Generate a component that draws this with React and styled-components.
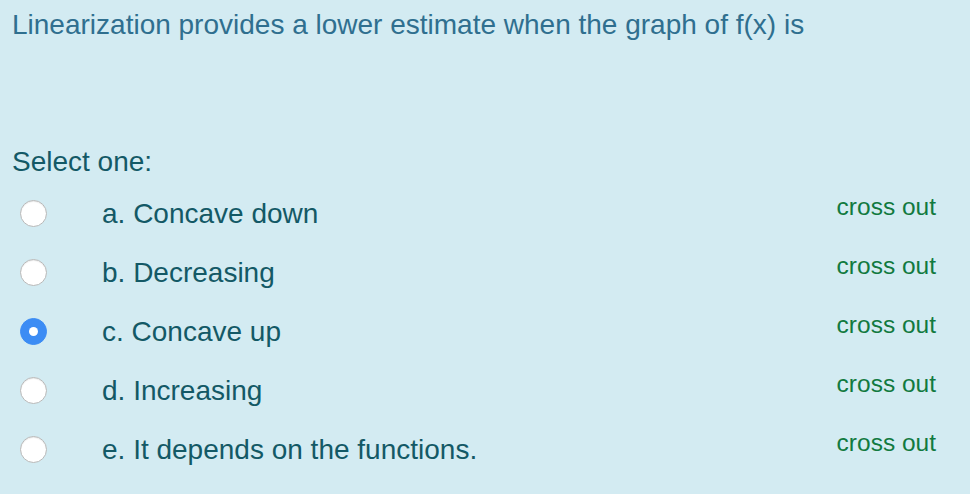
import React from 'react'
import styled, { createGlobalStyle } from 'styled-components'

const GlobalStyle = createGlobalStyle`
  html, body {
    margin: 0;
    padding: 0;
    background: #d3ebf2;
  }
  body {
    font-family: "Liberation Sans", Arial, Helvetica, sans-serif;
  }
`

const Page = styled.div`
  width: 970px;
  height: 494px;
  background: #d3ebf2;
  padding: 9px 0 0 12px;
  box-sizing: border-box;
  overflow: hidden;
`

const Question = styled.div`
  color: #2f6f8f;
  font-size: 28px;
  line-height: 32px;
  height: 138px;
`

const Prompt = styled.div`
  color: #135966;
  font-size: 28px;
  line-height: 30px;
  margin-bottom: 7px;
`

const OptionList = styled.div`
  display: flex;
  flex-direction: column;
`

const OptionRow = styled.label`
  display: grid;
  grid-template-columns: 90px 1fr auto;
  align-items: center;
  height: 59px;
  padding-right: 34px;
  cursor: pointer;
`

const Radio = styled.span`
  width: 27px;
  height: 27px;
  margin-left: 8px;
  border-radius: 50%;
  box-sizing: border-box;
  display: flex;
  align-items: center;
  justify-content: center;
  background: ${p => (p.checked ? '#3c8cf4' : '#ffffff')};
  border: 1px solid ${p => (p.checked ? '#3c8cf4' : '#b8b8b8')};
  box-shadow: ${p => (p.checked ? 'none' : 'inset 0 1px 1px rgba(0,0,0,0.08)')};

  &::after {
    content: '';
    display: ${p => (p.checked ? 'block' : 'none')};
    width: 9px;
    height: 9px;
    border-radius: 50%;
    background: #ffffff;
  }
`

const OptionText = styled.span`
  color: #135966;
  font-size: 28px;
  line-height: 32px;
`

const CrossOut = styled.span`
  color: #117a3f;
  font-size: 24.5px;
  line-height: 28px;
  position: relative;
  top: -7px;
`

const options = [
  { key: 'a', text: 'Concave down' },
  { key: 'b', text: 'Decreasing' },
  { key: 'c', text: 'Concave up', checked: true },
  { key: 'd', text: 'Increasing' },
  { key: 'e', text: 'It depends on the functions.' }
]

export default function App() {
  return (
    <Page>
      <GlobalStyle />
      <Question>Linearization provides a lower estimate when the graph of f(x) is</Question>
      <Prompt>Select one:</Prompt>
      <OptionList>
        {options.map(o => (
          <OptionRow key={o.key}>
            <Radio checked={o.checked} />
            <OptionText>
              {o.key}. {o.text}
            </OptionText>
            <CrossOut>cross out</CrossOut>
          </OptionRow>
        ))}
      </OptionList>
    </Page>
  )
}
